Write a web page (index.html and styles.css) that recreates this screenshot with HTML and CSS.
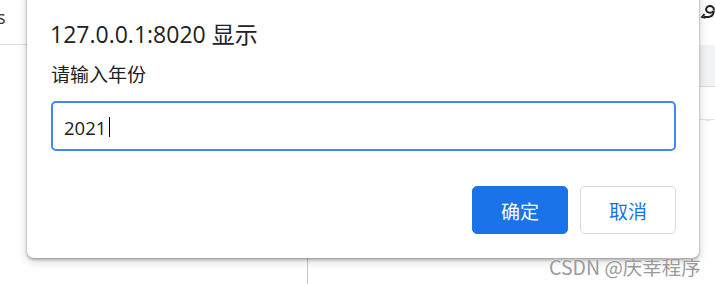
FILE: index.html
```html
<!DOCTYPE html>
<html lang="zh-CN">
<head>
<meta charset="utf-8">
<title>prompt</title>
<link rel="stylesheet" href="styles.css">
</head>
<body>
<div class="page">
  <div class="side-left">
    <div class="side-left-head"><span class="side-left-text">s</span></div>
  </div>
  <div class="main">
    <div class="main-col"></div>
    <div class="main-col"></div>
  </div>
  <div class="side-right">
    <div class="side-right-head">
      <svg width="15" height="18" viewBox="0 0 15 18"><path d="M14 5 C14 1.5 11 0.5 8.5 1.2 C6 2 5.5 5 7 6.6 C8.6 8.2 12 8 13.6 6" fill="none" stroke="#222" stroke-width="2"/><path d="M13.8 5.5 C13.8 9 12 11.5 8.5 12 C6.5 12.3 5 11.8 4 11.3" fill="none" stroke="#222" stroke-width="2"/><path d="M4.5 9 L2 12 L5.5 13" fill="none" stroke="#222" stroke-width="1.8"/></svg>
    </div>
    <div class="side-right-bar"></div>
    <div class="side-right-row"></div>
  </div>
</div>

<div class="dialog">
  <div class="dialog-title">127.0.0.1:8020 显示</div>
  <div class="dialog-msg">请输入年份</div>
  <div class="dialog-input"><span class="input-text">2021</span><span class="caret"></span></div>
  <div class="dialog-actions">
    <button class="btn btn-primary">确定</button>
    <button class="btn btn-secondary">取消</button>
  </div>
</div>

<div class="watermark">CSDN @庆幸程序</div>
</body>
</html>
```

FILE: styles.css
```css
html, body {
  margin: 0;
  padding: 0;
  background: #ffffff;
}
body {
  width: 715px;
  height: 284px;
  overflow: hidden;
  position: relative;
  font-family: "Open Sans", "Noto Sans CJK SC", sans-serif;
  color: #202124;
}
.page {
  display: flex;
  height: 284px;
}
.side-left {
  width: 27px;
  flex: none;
  overflow: hidden;
}
.side-left-head {
  height: 44px;
  border-bottom: 1px solid #dadce0;
  font-size: 18px;
  line-height: 34px;
  color: #333;
}
.side-left-text {
  display: inline-block;
  margin-left: -3px;
}
.main {
  flex: 1;
  display: flex;
}
.main-col {
  width: 281px;
  border-right: 1px solid #c5c9d1;
}
.main-col:first-child {
  width: 280px;
}
.main-col:last-child {
  border-right: none;
}
.side-right {
  width: 15px;
  flex: none;
}
.side-right-head {
  height: 45px;
  display: flex;
  align-items: flex-start;
  padding-top: 5px;
  box-sizing: border-box;
}
.side-right-bar {
  height: 41px;
  background: #f1f3f4;
  border-bottom: 1px solid #d7d9dc;
}
.side-right-row {
  height: 32px;
  border-bottom: 1px solid #e2e4e7;
  box-shadow: 0 6px 0 -5px #e2e4e7;
}

.dialog {
  position: absolute;
  left: 27px;
  top: -6px;
  width: 672px;
  height: 264px;
  box-sizing: border-box;
  padding: 24px 23px 24px 24px;
  background: #ffffff;
  border-radius: 0 0 7px 7px;
  box-shadow: 0 0 0 1px rgba(0,0,0,0.06), 0 2px 3px rgba(0,0,0,0.25), 0 3px 8px 2px rgba(0,0,0,0.12);
  display: flex;
  flex-direction: column;
}
.dialog-title {
  font-size: 23px;
  line-height: 32px;
  color: #202124;
  margin-left: -1px;
}
.dialog-msg {
  margin-top: 11px;
  font-size: 19px;
  line-height: 28px;
  color: #202124;
}
.dialog-input {
  margin-top: 12px;
  height: 50px;
  box-sizing: border-box;
  border: 2px solid #4285f4;
  border-radius: 5px;
  padding: 0 11px;
  display: flex;
  align-items: center;
}
.input-text {
  font-size: 18.5px;
  color: #202124;
  margin-top: 2px;
}
.caret {
  width: 1px;
  height: 20px;
  background: #000;
  margin-left: 3px;
  margin-top: 2px;
}
.dialog-actions {
  margin-top: auto;
  display: flex;
  justify-content: flex-end;
  gap: 12px;
}
.btn {
  width: 96px;
  height: 48px;
  border-radius: 5px;
  font-family: "Noto Sans CJK SC", sans-serif;
  font-size: 19px;
  cursor: pointer;
}
.btn-primary {
  background: #1a73e8;
  color: #ffffff;
  border: 1px solid #1a73e8;
}
.btn-secondary {
  background: #ffffff;
  color: #1a73e8;
  border: 1px solid #dadce0;
}
.watermark {
  position: absolute;
  left: 549px;
  top: 254px;
  font-family: "Noto Sans CJK SC", sans-serif;
  font-size: 19.5px;
  line-height: 26px;
  color: #9a9a9a;
  text-shadow: 0 0 2px #ffffff;
  white-space: nowrap;
}
```
